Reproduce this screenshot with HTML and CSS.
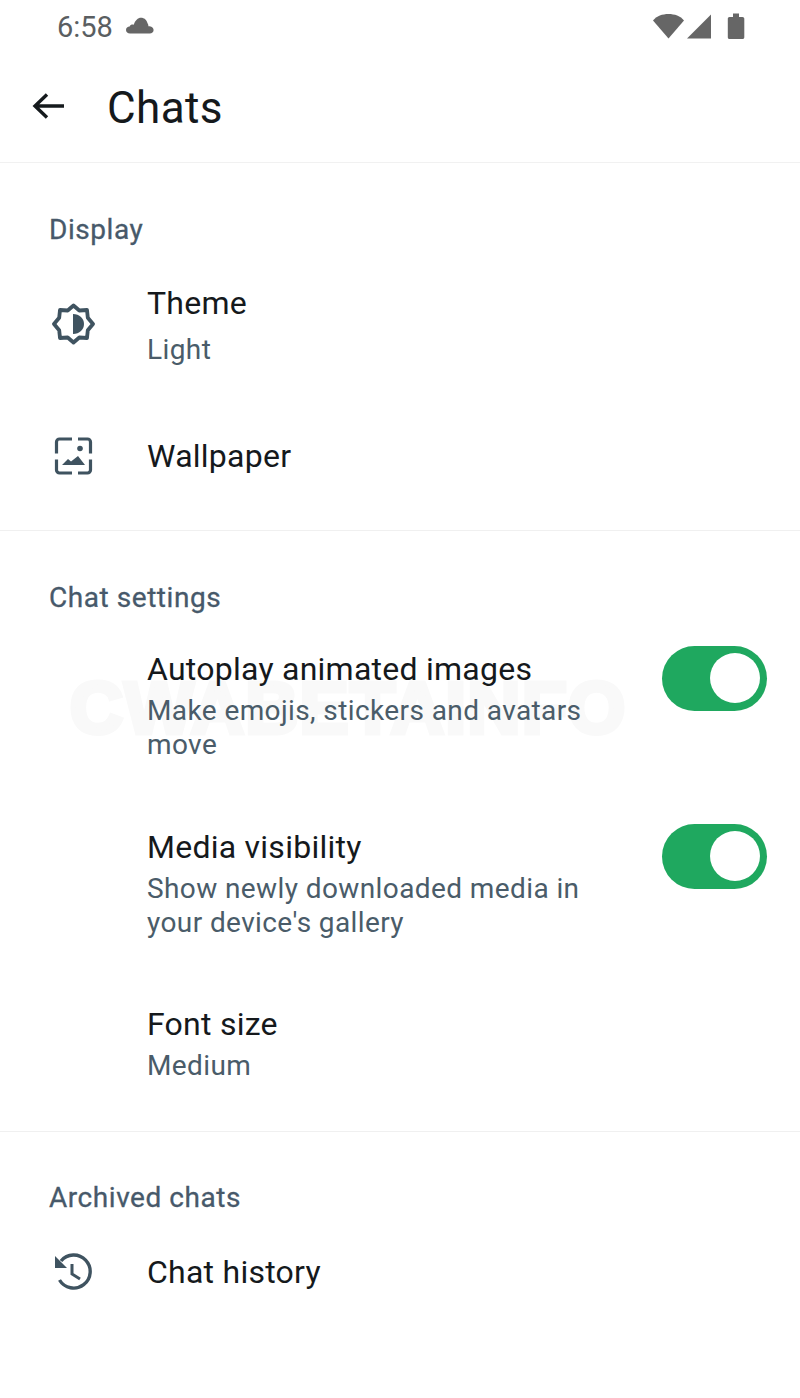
FILE: index.html
```html
<!DOCTYPE html>
<html lang="en">
<head>
<meta charset="utf-8">
<title>Chats</title>
<link rel="stylesheet" href="styles.css">
</head>
<body>
<div class="phone">
  <div class="watermark">CWABETAINFO</div>
  <header class="status">
    <div class="status-left">
      <span class="time">6:58</span>
      <svg class="cloud" width="28" height="17" viewBox="0 0 28 17"><path fill="#666" d="M4 16.500C1.800 16.500 0 15 0 13s1.600-3.400 3.600-3.500C4.500 7.600 6.300 7.200 7.800 7.800 9 3.500 12 .8 15 .8c3.200 0 5.700 2.200 6.500 5.400.8 1 .9 2 .9 3 2.700-.1 5.200 1.500 5.200 3.800s-1.700 3.500-3.800 3.500z"/></svg>
    </div>
    <div class="status-right">
      <svg width="31" height="26" viewBox="0 0 31 26"><path fill="#666" d="M0 7.500C3.500 3 9.500 1 15.500 1S27.500 3 31 7.500L15.500 25.500z"/></svg>
      <svg width="25" height="26" viewBox="0 0 25 26"><path fill="#666" d="M0 25.500L24 1.500v24z"/></svg>
      <svg width="18" height="26" viewBox="0 0 18 26"><path fill="#666" d="M6 .5h6V4h3.500c1 0 1.800.8 1.800 1.800v18.400c0 1-.8 1.800-1.800 1.800h-13C1.500 26 .8 25.200.8 24.200V5.800C.8 4.800 1.500 4 2.500 4H6z"/></svg>
    </div>
  </header>

  <div class="toolbar">
    <svg class="back" width="36" height="32" viewBox="0 0 36 32"><path fill="none" stroke="#151a1d" stroke-width="3.400" d="M34 16H5M17 4.500L5 16l12 11.500"/></svg>
    <h1 class="title">Chats</h1>
  </div>

  <section class="section section-display">
    <h2 class="heading">Display</h2>
    <div class="row row-theme">
      <svg class="icon" width="44" height="44" viewBox="0 0 44 44">
        <path fill="none" stroke="#3f5360" stroke-width="3.800" stroke-linejoin="round" d="M22.500 3.500l5.800 5 7.700-.5.800 7.700 5.200 6.300-5.200 6.300-.8 7.700-7.700-.5-5.800 5-5.800-5-7.700.5-.8-7.700L3 22l5.200-6.300.8-7.700 7.700.5z"/>
        <path fill="#3f5360" d="M22 12c6.500 0 11 4.500 11 10s-4.500 10-11 10z"/>
      </svg>
      <div class="text">
        <div class="name">Theme</div>
        <div class="sub sub-theme">Light</div>
      </div>
    </div>
    <div class="row row-wallpaper">
      <svg class="icon" width="44" height="44" viewBox="0 0 44 44">
        <g fill="none" stroke="#3f5360" stroke-width="3.200">
          <path d="M5.500 19.500V8a3 3 0 0 1 3-3H21"/>
          <path d="M27 5h9.500a3 3 0 0 1 3 3v11.500"/>
          <path d="M5.500 25.500V36a3 3 0 0 0 3 3H21"/>
          <path d="M27 39h9.500a3 3 0 0 0 3-3V25.500"/>
        </g>
        <circle cx="29" cy="14.500" r="2.800" fill="#3f5360"/>
        <path fill="#3f5360" d="M11 31l6-6 3 2.500 7-5.500 7 9z"/>
      </svg>
      <div class="text">
        <div class="name">Wallpaper</div>
      </div>
    </div>
  </section>

  <section class="section section-chat">
    <h2 class="heading">Chat settings</h2>
    <div class="row row-top row-autoplay">
      <div class="text">
        <div class="name">Autoplay animated images</div>
        <div class="sub">Make emojis, stickers and avatars<br>move</div>
      </div>
      <div class="toggle"><span class="knob"></span></div>
    </div>
    <div class="row row-top row-media">
      <div class="text">
        <div class="name">Media visibility</div>
        <div class="sub">Show newly downloaded media in<br>your device's gallery</div>
      </div>
      <div class="toggle"><span class="knob"></span></div>
    </div>
    <div class="row row-top row-font">
      <div class="text">
        <div class="name">Font size</div>
        <div class="sub">Medium</div>
      </div>
    </div>
  </section>

  <section class="section section-archived">
    <h2 class="heading">Archived chats</h2>
    <div class="row row-history">
      <svg class="icon" width="44" height="44" viewBox="0 0 44 44">
        <path fill="none" stroke="#3f5360" stroke-width="3.400" d="M8.500 30A16.500 16.500 0 1 0 10 11"/>
        <path fill="#3f5360" d="M4 6v12h12z"/>
        <path fill="none" stroke="#3f5360" stroke-width="3" d="M21 14v10l8 5"/>
      </svg>
      <div class="text">
        <div class="name">Chat history</div>
      </div>
    </div>
  </section>
</div>
</body>
</html>
```

FILE: styles.css
```css
* { box-sizing: border-box; }
html, body { margin: 0; padding: 0; background: #fff; }
body { font-family: Roboto, "Liberation Sans", sans-serif; }
.phone { position: relative; width: 800px; height: 1398px; overflow: hidden; background: #fff; }

.watermark {
  position: absolute; left: 70px; top: 668px; width: 560px;
  font: 900 73px/80px "Liberation Sans", sans-serif;
  letter-spacing: 1.7px;
  -webkit-text-stroke: 5px #f9f9f9;
  color: #f9f9f9; white-space: nowrap;
}

.status { display: flex; justify-content: space-between; align-items: center; height: 54px; padding: 0 55px 0 57px; position: relative; }
.status-left { display: flex; align-items: center; gap: 13px; }
.time { font-size: 29px; line-height: 54px; color: #5a5e61; }
.cloud { margin-bottom: 4px; }
.status-right { display: flex; align-items: center; gap: 3px; margin-bottom: 3px; }
.status-right svg:last-child { margin-left: 12px; }

.toolbar { display: flex; align-items: center; height: 109px; padding: 0 0 0 30px; border-bottom: 1px solid #f1f1f1; position: relative; }
.back { flex: none; margin-right: 41px; margin-bottom: 4px; }
.title { margin: 0; font-size: 44px; font-weight: 400; color: #15191c; letter-spacing: .4px; line-height: 54px; }

.section { position: relative; border-bottom: 1px solid #f0f0f0; }
.section-display { height: 368px; padding-top: 49px; }
.section-chat { height: 601px; padding-top: 49px; }
.section-archived { height: 266px; padding-top: 48px; border-bottom: 0; }

.heading { margin: 0 0 0 49px; font-size: 28px; line-height: 36px; font-weight: 400; color: #47596a; letter-spacing: .55px; -webkit-text-stroke: .3px #47596a; }

.row { display: flex; align-items: center; padding-left: 51px; }
.icon { flex: none; margin-right: 52px; }
.row-top { padding-left: 147px; align-items: flex-start; justify-content: space-between; padding-right: 33px; }
.row-theme { margin-top: 33px; }
.row-wallpaper { margin-top: 67px; }
.row-autoplay { margin-top: 31px; }
.row-media { margin-top: 63px; }
.row-font { margin-top: 62px; }
.row-history { margin-top: 34px; }

.name { font-size: 32px; line-height: 44px; color: #15191c; white-space: nowrap; letter-spacing: .25px; }
.sub { font-size: 28px; line-height: 34px; color: #4a5c69; letter-spacing: .4px; white-space: nowrap; margin-top: 3px; }
.sub-theme { margin-top: 8px; }

.toggle { position: relative; width: 105px; height: 65px; border-radius: 33px; background: #1fa85f; margin-top: -1px; }
.knob { position: absolute; left: 48px; top: 7px; width: 50px; height: 50px; border-radius: 50%; background: #fff; }
```
